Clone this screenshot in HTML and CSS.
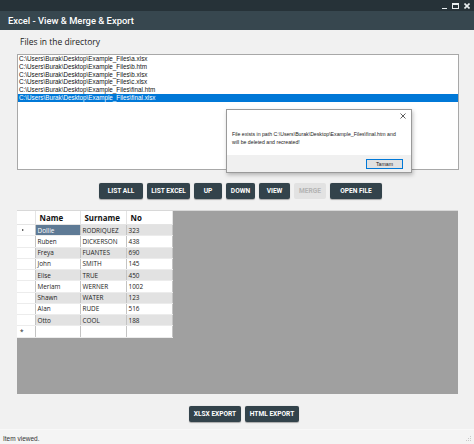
FILE: index.html
```html
<!DOCTYPE html>
<html>
<head>
<meta charset="utf-8">
<link rel="stylesheet" href="styles.css">
</head>
<body>
<div class="window">
  <div class="topbar">
    <span class="ctl ctl-min"></span>
    <span class="ctl ctl-max"></span>
    <span class="ctl ctl-close">
      <svg width="6" height="6" viewBox="0 0 6 6"><path d="M0.5 0.5L5.5 5.5M5.5 0.5L0.5 5.5" stroke="#e8eef0" stroke-width="1.6"/></svg>
    </span>
  </div>
  <div class="titlebar">Excel - View &amp; Merge &amp; Export</div>
  <div class="main">
    <div class="label">Files in the directory</div>
    <div class="listbox">
      <div class="item">C:\Users\Burak\Desktop\Example_Files\a.xlsx</div>
      <div class="item">C:\Users\Burak\Desktop\Example_Files\b.htm</div>
      <div class="item">C:\Users\Burak\Desktop\Example_Files\b.xlsx</div>
      <div class="item">C:\Users\Burak\Desktop\Example_Files\c.xlsx</div>
      <div class="item">C:\Users\Burak\Desktop\Example_Files\final.htm</div>
      <div class="item selected">C:\Users\Burak\Desktop\Example_Files\final.xlsx</div>
    </div>
    <div class="toolbar">
      <button class="btn w44">LIST ALL</button>
      <button class="btn w43">LIST EXCEL</button>
      <button class="btn w28">UP</button>
      <button class="btn w29">DOWN</button>
      <button class="btn w31">VIEW</button>
      <button class="btn w32 disabled">MERGE</button>
      <button class="btn w52">OPEN FILE</button>
    </div>
    <div class="grid">
      <table class="table">
        <colgroup><col class="c0"><col class="c1"><col class="c2"><col class="c3"></colgroup>
        <thead>
          <tr><th class="rh"></th><th>Name</th><th>Surname</th><th>No</th></tr>
        </thead>
        <tbody>
          <tr class="alt"><td class="rh"><span class="arrow"></span></td><td class="sel">Dollie</td><td>RODRIQUEZ</td><td>323</td></tr>
          <tr><td class="rh"></td><td>Ruben</td><td>DICKERSON</td><td>438</td></tr>
          <tr class="alt"><td class="rh"></td><td>Freya</td><td>FUANTES</td><td>690</td></tr>
          <tr><td class="rh"></td><td>John</td><td>SMITH</td><td>145</td></tr>
          <tr class="alt"><td class="rh"></td><td>Elise</td><td>TRUE</td><td>450</td></tr>
          <tr><td class="rh"></td><td>Meriam</td><td>WERNER</td><td>1002</td></tr>
          <tr class="alt"><td class="rh"></td><td>Shawn</td><td>WATER</td><td>123</td></tr>
          <tr><td class="rh"></td><td>Alan</td><td>RUDE</td><td>516</td></tr>
          <tr class="alt"><td class="rh"></td><td>Otto</td><td>COOL</td><td>188</td></tr>
          <tr><td class="rh star">*</td><td></td><td></td><td></td></tr>
        </tbody>
      </table>
    </div>
    <div class="exports">
      <button class="btn w52">XLSX EXPORT</button>
      <button class="btn w54">HTML EXPORT</button>
    </div>
  </div>
  <div class="status">
    <span class="status-text">Item viewed.</span>
    <svg class="grip" width="6" height="6" viewBox="0 0 6 6"><g fill="#c8c8c8"><rect x="4" y="0" width="1" height="1"/><rect x="2" y="2" width="1" height="1"/><rect x="4" y="2" width="1" height="1"/><rect x="0" y="4" width="1" height="1"/><rect x="2" y="4" width="1" height="1"/><rect x="4" y="4" width="1" height="1"/></g></svg>
  </div>

  <div class="dialog">
    <div class="dlg-body">
      <svg class="dlg-close" width="6" height="6" viewBox="0 0 6 6"><path d="M0.5 0.5L5.5 5.5M5.5 0.5L0.5 5.5" stroke="#333" stroke-width="0.8"/></svg>
      <div class="dlg-text">File exists in path C:\Users\Burak\Desktop\Example_Files\final.htm and<br>will be deleted and recreated!</div>
    </div>
    <div class="dlg-foot">
      <button class="dlg-btn">Tamam</button>
    </div>
  </div>
</div>
</body>
</html>
```
FILE: styles.css
```css
html, body {
  margin: 0;
  padding: 0;
}
body {
  width: 474px;
  height: 444px;
  overflow: hidden;
  background: #f1f1f1;
  font-family: Roboto, "Liberation Sans", sans-serif;
}
.window {
  position: relative;
  width: 474px;
  height: 444px;
  display: flex;
  flex-direction: column;
}
.topbar {
  height: 11px;
  background: #263238;
  display: flex;
  justify-content: flex-end;
  align-items: center;
  gap: 5px;
  padding-right: 4px;
}
.ctl {
  display: block;
  width: 6px;
  height: 6px;
  box-sizing: border-box;
}
.ctl-min {
  border-bottom: 1.5px solid #e8eef0;
  width: 5px;
}
.ctl-max {
  border: 1.5px solid #e8eef0;
  border-top-width: 2px;
  width: 7px;
}
.ctl-close svg {
  display: block;
}
.titlebar {
  height: 19px;
  background: #37474f;
  color: #ffffff;
  font-family: Roboto, sans-serif;
  font-weight: 500;
  font-size: 9.4px;
  line-height: 19px;
  padding-left: 8px;
}
.main {
  padding-left: 17px;
  display: flex;
  flex-direction: column;
}
.label {
  margin-top: 7px;
  height: 10px;
  line-height: 10px;
  font-size: 8.5px;
  padding-left: 3px;
  color: #222;
  font-family: "Open Sans", sans-serif;
}
.listbox {
  margin-top: 7px;
  width: 442px;
  height: 116px;
  box-sizing: border-box;
  border: 1px solid #a8a8a8;
  background: #ffffff;
  font-family: "Liberation Sans", sans-serif;
  font-size: 6.3px;
  color: #111;
}
.item {
  height: 7.8px;
  line-height: 7.8px;
  padding-left: 1px;
  white-space: nowrap;
}
.item.selected {
  background: #0078d7;
  color: #ffffff;
}
.toolbar {
  margin-top: 13px;
  height: 16px;
  padding-left: 82px;
  display: flex;
  gap: 4px;
}
.btn {
  height: 16px;
  border: none;
  border-radius: 2px;
  background: #33434b;
  color: #ffffff;
  font-family: Roboto, sans-serif;
  font-weight: 700;
  font-size: 6.6px;
  padding: 0;
  margin: 0;
  box-shadow: 0 0.5px 1px rgba(0,0,0,0.3);
}
.btn.disabled {
  background: #e2e2e2;
  color: #b4b4b4;
  box-shadow: none;
}
.w28 { width: 28px; }
.w29 { width: 29px; }
.w31 { width: 31px; }
.w32 { width: 32px; }
.w43 { width: 43px; }
.w44 { width: 44px; }
.w52 { width: 52px; }
.w54 { width: 54px; }
.grid {
  margin-top: 11px;
  width: 441px;
  height: 184px;
  background: #a0a0a0;
  border-top: 1px solid #d8d8d8;
  box-sizing: border-box;
}
.table {
  border-collapse: collapse;
  table-layout: fixed;
  width: 155px;
  background: #ffffff;
  font-family: "Open Sans", sans-serif;
}
.c0 { width: 18px; }
.c1 { width: 45px; }
.c2 { width: 46px; }
.c3 { width: 46px; }
.table th {
  height: 13px;
  padding: 0 0 0 4px;
  text-align: left;
  font-weight: 700;
  font-size: 7.9px;
  color: #111;
  background: #ffffff;
  border-right: 1px solid #e4e4e4;
  border-bottom: 1px solid #e4e4e4;
}
.table td {
  height: 11.27px;
  padding: 0 0 0 2px;
  font-size: 6.4px;
  color: #222;
  border-right: 1px solid #c4c4c4;
  border-bottom: 1px solid #ececec;
  white-space: nowrap;
  overflow: hidden;
  box-sizing: border-box;
}
.table tr.alt td {
  background: #e2e2e2;
}
.table td.rh, .table tr.alt td.rh {
  background: #ffffff;
  border-right: 1px solid #c4c4c4;
  position: relative;
}
.table td.sel, .table tr.alt td.sel {
  background: #5e7a95;
  color: #ffffff;
}
.arrow {
  display: block;
  width: 0;
  height: 0;
  margin-left: 3px;
  border-top: 1.5px solid transparent;
  border-bottom: 1.5px solid transparent;
  border-left: 2px solid #333;
}
.star {
  font-size: 6px;
  line-height: 6px;
  padding-left: 3px !important;
}
.exports {
  margin-top: 12px;
  height: 16px;
  padding-left: 172px;
  display: flex;
  gap: 4px;
}
.status {
  margin-top: auto;
  height: 14px;
  display: flex;
  align-items: center;
  justify-content: space-between;
  padding: 0 2px 0 3px;
  background: #f4f4f4;
  border-top: 1px solid #f8f8f8;
}
.status-text {
  font-family: "Liberation Sans", sans-serif;
  font-size: 6.5px;
  color: #333;
  margin-top: 2px;
}
.grip {
  align-self: flex-end;
  margin-bottom: 2px;
}
.dialog {
  position: absolute;
  left: 226px;
  top: 109px;
  width: 186px;
  height: 64px;
  box-sizing: border-box;
  border: 1px solid #9a9a9a;
  background: #ffffff;
  box-shadow: 1px 2px 4px rgba(0,0,0,0.25);
  display: flex;
  flex-direction: column;
  font-family: "Liberation Sans", sans-serif;
}
.dlg-body {
  position: relative;
  flex: 1;
}
.dlg-close {
  position: absolute;
  right: 5px;
  top: 3px;
}
.dlg-text {
  position: absolute;
  left: 5px;
  top: 21px;
  font-size: 5.2px;
  line-height: 7.5px;
  color: #222;
  white-space: nowrap;
}
.dlg-foot {
  height: 17px;
  background: #f0f0f0;
  display: flex;
  justify-content: flex-end;
  align-items: center;
  padding-right: 8px;
}
.dlg-btn {
  width: 37px;
  height: 10px;
  padding: 0;
  margin: 0;
  background: #e1e1e1;
  border: 1px solid #0078d7;
  font-family: "Liberation Sans", sans-serif;
  font-size: 5.2px;
  color: #222;
}
```
